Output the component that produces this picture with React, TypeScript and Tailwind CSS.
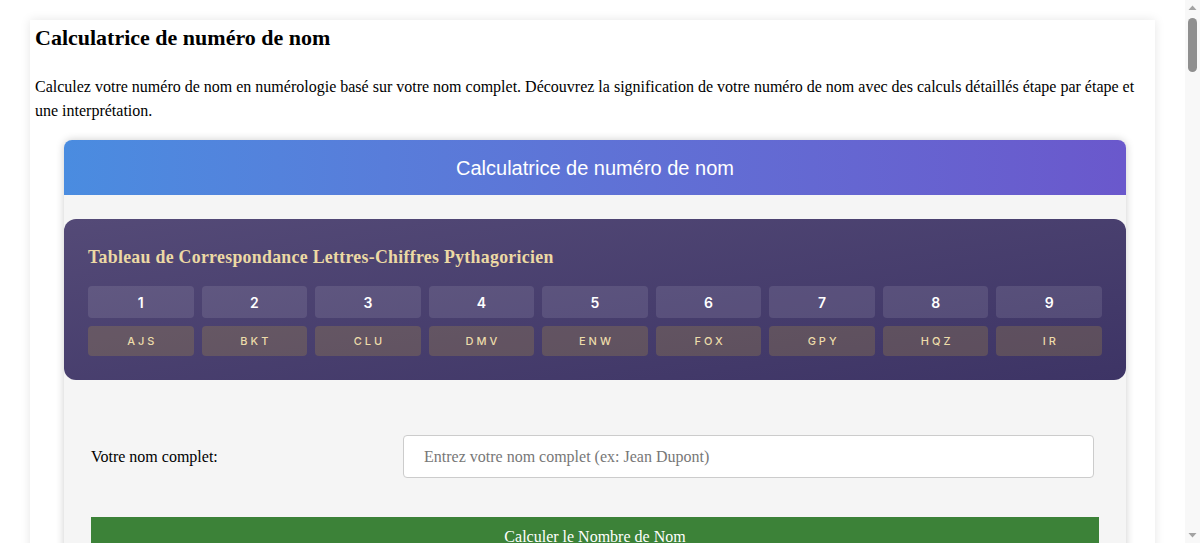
import React from "react";

const rows: [string, string][] = [
  ["1", "AJS"],
  ["2", "BKT"],
  ["3", "CLU"],
  ["4", "DMV"],
  ["5", "ENW"],
  ["6", "FOX"],
  ["7", "GPY"],
  ["8", "HQZ"],
  ["9", "IR"],
];

function ScrollBar() {
  return (
    <div className="flex h-[543px] w-[15px] shrink-0 flex-col items-center bg-[#f8f8f8]">
      <svg width="15" height="15" viewBox="0 0 15 15" className="shrink-0">
        <polygon points="3.5,10 7.5,5.5 11.5,10" fill="#a3a3a3" />
      </svg>
      <div className="mt-[3px] h-[54px] w-[9px] rounded-full bg-[#8f8f8f]" />
      <div className="flex-1" />
      <svg width="15" height="15" viewBox="0 0 15 15" className="shrink-0">
        <polygon points="3.5,5 7.5,9.5 11.5,5" fill="#a3a3a3" />
      </svg>
    </div>
  );
}

export default function App() {
  return (
    <div className="flex h-[543px] overflow-hidden bg-white">
      <div className="min-w-0 flex-1">
        <div className="pt-[20px] pl-[30px] pb-[40px]" style={{ fontFamily: '"Liberation Serif", serif' }}>
          <div className="w-[1125px] bg-white px-[5px] pt-[5px] pb-[40px] shadow-[0_0_10px_rgba(0,0,0,0.1)]">
            <h1 className="text-[22px] font-bold leading-[25px] text-black">Calculatrice de numéro de nom</h1>
            <p className="mt-[25px] text-[16px] leading-[24px] text-black">
              Calculez votre numéro de nom en numérologie basé sur votre nom complet. Découvrez la signification de votre numéro de nom avec des calculs détaillés étape par étape et une interprétation.
            </p>
            <div className="ml-[29px] mt-[17px] w-[1062px] overflow-hidden rounded-t-lg bg-[#f5f5f5] shadow-[0_0_8px_rgba(0,0,0,0.2)]">
              <div
                className="flex h-[55px] items-center justify-center bg-gradient-to-r from-[#4a8ce0] to-[#6a58cc] text-[20px] text-white"
                style={{ fontFamily: '"Liberation Sans", Arial, sans-serif' }}
              >
                Calculatrice de numéro de nom
              </div>
              <div className="pt-[24px] pb-[40px]">
                <div className="rounded-xl bg-gradient-to-br from-[#544a77] to-[#3d3465] px-[24px] pt-[24px] pb-[24px]">
                  <h2 className="text-[17.8px] font-bold leading-[28px] tracking-[0.3px] text-[#ecd9a4]" style={{ fontFamily: '"Liberation Serif", serif' }}>
                    Tableau de Correspondance Lettres-Chiffres Pythagoricien
                  </h2>
                  <div className="mt-[15px] grid grid-cols-9 gap-x-[8px] gap-y-[8px]" style={{ fontFamily: 'Inter, "Liberation Sans", sans-serif' }}>
                    {rows.map(([n]) => (
                      <div key={n} className="flex h-[32px] items-center justify-center rounded bg-white/10 text-[14px] font-semibold text-white">
                        {n}
                      </div>
                    ))}
                    {rows.map(([n, l]) => (
                      <div key={l + n} className="flex h-[30px] items-center justify-center rounded bg-[#d4af37]/20 pl-[3px] text-[11px] font-medium tracking-[3px] text-[#ecdcaa]">
                        {l}
                      </div>
                    ))}
                  </div>
                </div>
                <div className="mt-[55px] flex items-center pl-[27px]">
                  <label className="w-[312px] text-[16px] text-black">Votre nom complet:</label>
                  <input
                    className="h-[43px] w-[691px] rounded border border-[#cccccc] bg-white px-[20px] text-[16px] text-black outline-none placeholder:text-[#777]"
                    placeholder="Entrez votre nom complet (ex: Jean Dupont)"
                    style={{ fontFamily: '"Liberation Serif", serif' }}
                  />
                </div>
                <button
                  className="ml-[27px] mt-[39px] flex h-[40px] w-[1008px] items-center justify-center bg-[#3c8238] text-[16px] text-white"
                  style={{ fontFamily: '"Liberation Serif", serif' }}
                >
                  Calculer le Nombre de Nom
                </button>
              </div>
            </div>
          </div>
        </div>
      </div>
      <ScrollBar />
    </div>
  );
}
